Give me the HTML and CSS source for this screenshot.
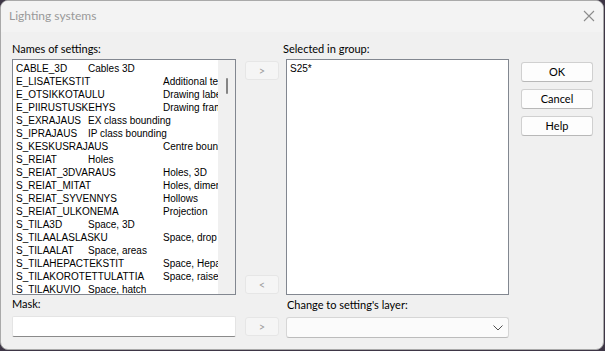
FILE: index.html
```html
<!DOCTYPE html>
<html>
<head>
<meta charset="utf-8">
<link rel="stylesheet" href="styles.css">
</head>
<body>
<div class="window">
  <div class="titlebar">
    <span class="title">Lighting systems</span>
    <svg class="close" width="12" height="12" viewBox="0 0 12 12"><path d="M1 1 L11 11 M11 1 L1 11" stroke="#8c8c8c" stroke-width="1.1" fill="none"/></svg>
  </div>
  <div class="content">
    <div class="label lbl-names">Names of settings:</div>
    <div class="label lbl-selected">Selected in group:</div>

    <div class="listbox names">
      <div class="items">
        <div class="row"><span class="n n1">CABLE_3D</span><span class="d">Cables 3D</span></div>
        <div class="row"><span class="n n2">E_LISATEKSTIT</span><span class="d">Additional texts</span></div>
        <div class="row"><span class="n n2">E_OTSIKKOTAULU</span><span class="d">Drawing label</span></div>
        <div class="row"><span class="n n2">E_PIIRUSTUSKEHYS</span><span class="d">Drawing frame</span></div>
        <div class="row"><span class="n n1">S_EXRAJAUS</span><span class="d">EX class bounding</span></div>
        <div class="row"><span class="n n1">S_IPRAJAUS</span><span class="d">IP class bounding</span></div>
        <div class="row"><span class="n n2">S_KESKUSRAJAUS</span><span class="d">Centre bounding</span></div>
        <div class="row"><span class="n n1">S_REIAT</span><span class="d">Holes</span></div>
        <div class="row"><span class="n n2">S_REIAT_3DVARAUS</span><span class="d">Holes, 3D</span></div>
        <div class="row"><span class="n n2">S_REIAT_MITAT</span><span class="d">Holes, dimensions</span></div>
        <div class="row"><span class="n n2">S_REIAT_SYVENNYS</span><span class="d">Hollows</span></div>
        <div class="row"><span class="n n2">S_REIAT_ULKONEMA</span><span class="d">Projection</span></div>
        <div class="row"><span class="n n1">S_TILA3D</span><span class="d">Space, 3D</span></div>
        <div class="row"><span class="n n2">S_TILAALASLASKU</span><span class="d">Space, drop ceiling</span></div>
        <div class="row"><span class="n n1">S_TILAALAT</span><span class="d">Space, areas</span></div>
        <div class="row"><span class="n n2">S_TILAHEPACTEKSTIT</span><span class="d">Space, Hepac texts</span></div>
        <div class="row"><span class="n n2">S_TILAKOROTETTULATTIA</span><span class="d">Space, raised floor</span></div>
        <div class="row"><span class="n n1">S_TILAKUVIO</span><span class="d">Space, hatch</span></div>
      </div>
      <div class="vscroll"><div class="thumb"></div></div>
    </div>

    <div class="midcol">
      <button class="arrow">&gt;</button>
      <button class="arrow">&lt;</button>
    </div>

    <div class="listbox selected">
      <div class="items">
        <div class="row">S25*</div>
      </div>
    </div>

    <div class="btncol">
      <button class="btn">OK</button>
      <button class="btn">Cancel</button>
      <button class="btn">Help</button>
    </div>

    <div class="label lbl-mask">Mask:</div>
    <div class="label lbl-change">Change to setting's layer:</div>

    <div class="textbox mask"></div>
    <button class="arrow arrow-bottom">&gt;</button>
    <div class="combo">
      <svg class="chev" width="10" height="6" viewBox="0 0 10 6"><path d="M0.5 0.5 L5 5 L9.5 0.5" stroke="#505050" stroke-width="1" fill="none"/></svg>
    </div>
  </div>
</div>
</body>
</html>
```

FILE: styles.css
```css
html, body {
  margin: 0;
  padding: 0;
  background: #3e3646;
}
body {
  width: 605px;
  height: 351px;
  overflow: hidden;
  font-family: Lato, "Noto Sans", sans-serif;
}
.window {
  width: 602px;
  height: 348px;
  background: #f0f0f0;
  border: 1px solid #a9a9a9;
  border-radius: 8px;
  overflow: hidden;
}
.titlebar {
  height: 31px;
  background: #f3f3f3;
  display: flex;
  align-items: center;
  justify-content: space-between;
  padding: 0 8px 0 8px;
}
.title {
  font-size: 12px;
  color: #999999;
  margin-top: -2px;
}
.close {
  margin-right: 0px;
  margin-top: -2px;
}
.content {
  display: grid;
  grid-template-columns: 224px 9px 34px 7px 223px 12px 72px;
  grid-template-rows: 17px 236px 21px 21px;
  padding: 10px 0 0 11px;
}
.label {
  font-size: 11px;
  color: #000;
  line-height: 14px;
  white-space: nowrap;
}
.lbl-names { grid-column: 1; grid-row: 1; }
.lbl-selected { grid-column: 5; grid-row: 1; margin-left: -3px; }
.lbl-mask { grid-column: 1; grid-row: 3; align-self: end; margin-bottom: 5px; }
.lbl-change { grid-column: 5; grid-row: 3; align-self: end; margin-bottom: 4px; margin-left: 1px; }

.listbox {
  background: #fff;
  border: 1px solid #828790;
  display: flex;
  overflow: hidden;
  grid-row: 2;
}
.names { grid-column: 1; }
.selected { grid-column: 5; }
.items {
  flex: 1;
  padding: 2px 0 0 3px;
  overflow: hidden;
  font-family: "Liberation Sans", sans-serif;
  font-size: 10px;
  color: #000;
}
.row {
  height: 13px;
  line-height: 13px;
  white-space: nowrap;
  display: flex;
}
.n { flex: none; }
.n1 { width: 72px; }
.n2 { width: 147px; }
.d { flex: none; }
.vscroll {
  width: 17px;
  background: #f0f0f0;
  position: relative;
}
.thumb {
  position: absolute;
  left: 8px;
  top: 18px;
  width: 2px;
  height: 16px;
  background: #858585;
  border-radius: 1px;
}
.midcol {
  grid-column: 3;
  grid-row: 2;
  display: flex;
  flex-direction: column;
  justify-content: space-between;
  padding: 2px 0 1px 0;
}
button {
  font-family: Lato, "Noto Sans", sans-serif;
  margin: 0;
  padding: 0;
}
.arrow {
  width: 34px;
  height: 19px;
  background: #f5f5f5;
  border: 1px solid #e6e6e6;
  border-radius: 3px;
  color: #a0a0a0;
  font-size: 11px;
  line-height: 16px;
}
.arrow-bottom {
  grid-column: 3;
  grid-row: 4;
  align-self: start;
  margin-top: 1px;
}
.btncol {
  grid-column: 7;
  grid-row: 2;
  display: flex;
  flex-direction: column;
  gap: 7px;
  padding-top: 3px;
}
.btn {
  width: 72px;
  height: 20px;
  background: #fdfdfd;
  border: 1px solid #d0d0d0;
  border-bottom-color: #b8b8b8;
  border-radius: 3px;
  color: #000;
  font-size: 11px;
  line-height: 16px;
}
.textbox {
  grid-column: 1;
  grid-row: 4;
  background: #fff;
  border: 1px solid #e4e4e4;
  border-bottom: 1px solid #8a8a8a;
  border-radius: 2px;
}
.combo {
  grid-column: 5;
  grid-row: 4;
  margin-top: 1px;
  height: 19px;
  background: #fbfbfb;
  border: 1px solid #d6d6d6;
  border-bottom-color: #bcbcbc;
  border-radius: 3px;
  display: flex;
  align-items: center;
  justify-content: flex-end;
  padding-right: 5px;
}
```
